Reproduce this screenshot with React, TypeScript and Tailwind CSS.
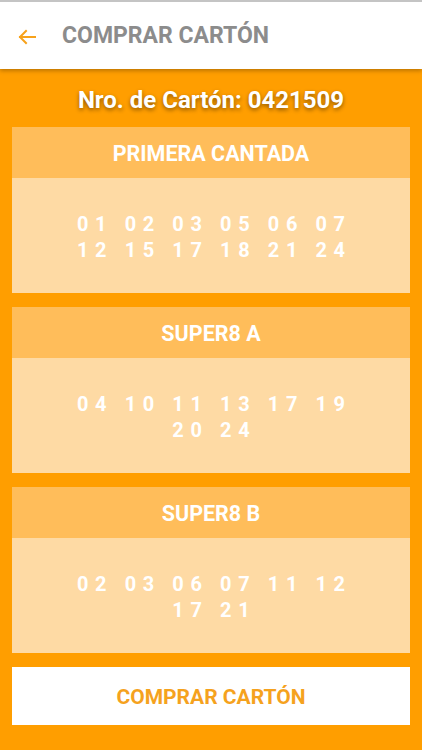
import React from "react";

const cards = [
  { title: "PRIMERA CANTADA", nums: ["01", "02", "03", "05", "06", "07", "12", "15", "17", "18", "21", "24"] },
  { title: "SUPER8 A", nums: ["04", "10", "11", "13", "17", "19", "20", "24"] },
  { title: "SUPER8 B", nums: ["02", "03", "06", "07", "11", "12", "17", "21"] },
];

function chunk(a: string[], n: number) {
  const r: string[][] = [];
  for (let i = 0; i < a.length; i += n) r.push(a.slice(i, i + n));
  return r;
}

export default function App() {
  return (
    <div className="w-[422px] h-[750px] bg-[#FF9E00] flex flex-col overflow-hidden" style={{ fontFamily: "Roboto, 'Noto Sans', sans-serif" }}>
      <div className="h-[69px] bg-white border-t-2 border-[#c4c4c4] flex items-center pt-[2px] shadow-[0_2px_4px_rgba(0,0,0,0.25)] relative z-10">
        <svg className="ml-[15px]" width="24" height="24" viewBox="0 0 24 24" fill="none" stroke="#F7A21B" strokeWidth="2" strokeLinecap="square">
          <path d="M20 12H5" />
          <path d="M11 6l-6 6 6 6" />
        </svg>
        <div className="ml-[23px] text-[23px] font-bold text-[#8c8c8c]">COMPRAR CARTÓN</div>
      </div>
      <div className="px-3 flex flex-col">
        <div className="h-[58px] flex items-center justify-center pt-[3px] text-white font-bold text-[24px] [text-shadow:0_2px_4px_rgba(0,0,0,0.45)]">
          Nro. de Cartón: 0421509
        </div>
        <div className="flex flex-col gap-[14px]">
          {cards.map((c) => (
            <div key={c.title} className="flex flex-col">
              <div className="h-[51px] bg-[#FFBD5A] flex items-center justify-center pt-[3px] text-white font-bold text-[21.5px]">
                {c.title}
              </div>
              <div className="h-[115px] bg-[#FEDAA4] flex flex-col items-center justify-center pt-[2px]">
                {chunk(c.nums, 6).map((row, i) => (
                  <div key={i} className="text-white font-bold text-[20px] leading-[26px] tracking-[0.33em] whitespace-pre pl-[0.33em]">
                    {row.join(" ")}
                  </div>
                ))}
              </div>
            </div>
          ))}
        </div>
        <div className="mt-[14px] h-[58px] bg-white flex items-center justify-center pt-[3px] text-[#F5A21E] font-bold text-[21px]">
          COMPRAR CARTÓN
        </div>
      </div>
    </div>
  );
}
